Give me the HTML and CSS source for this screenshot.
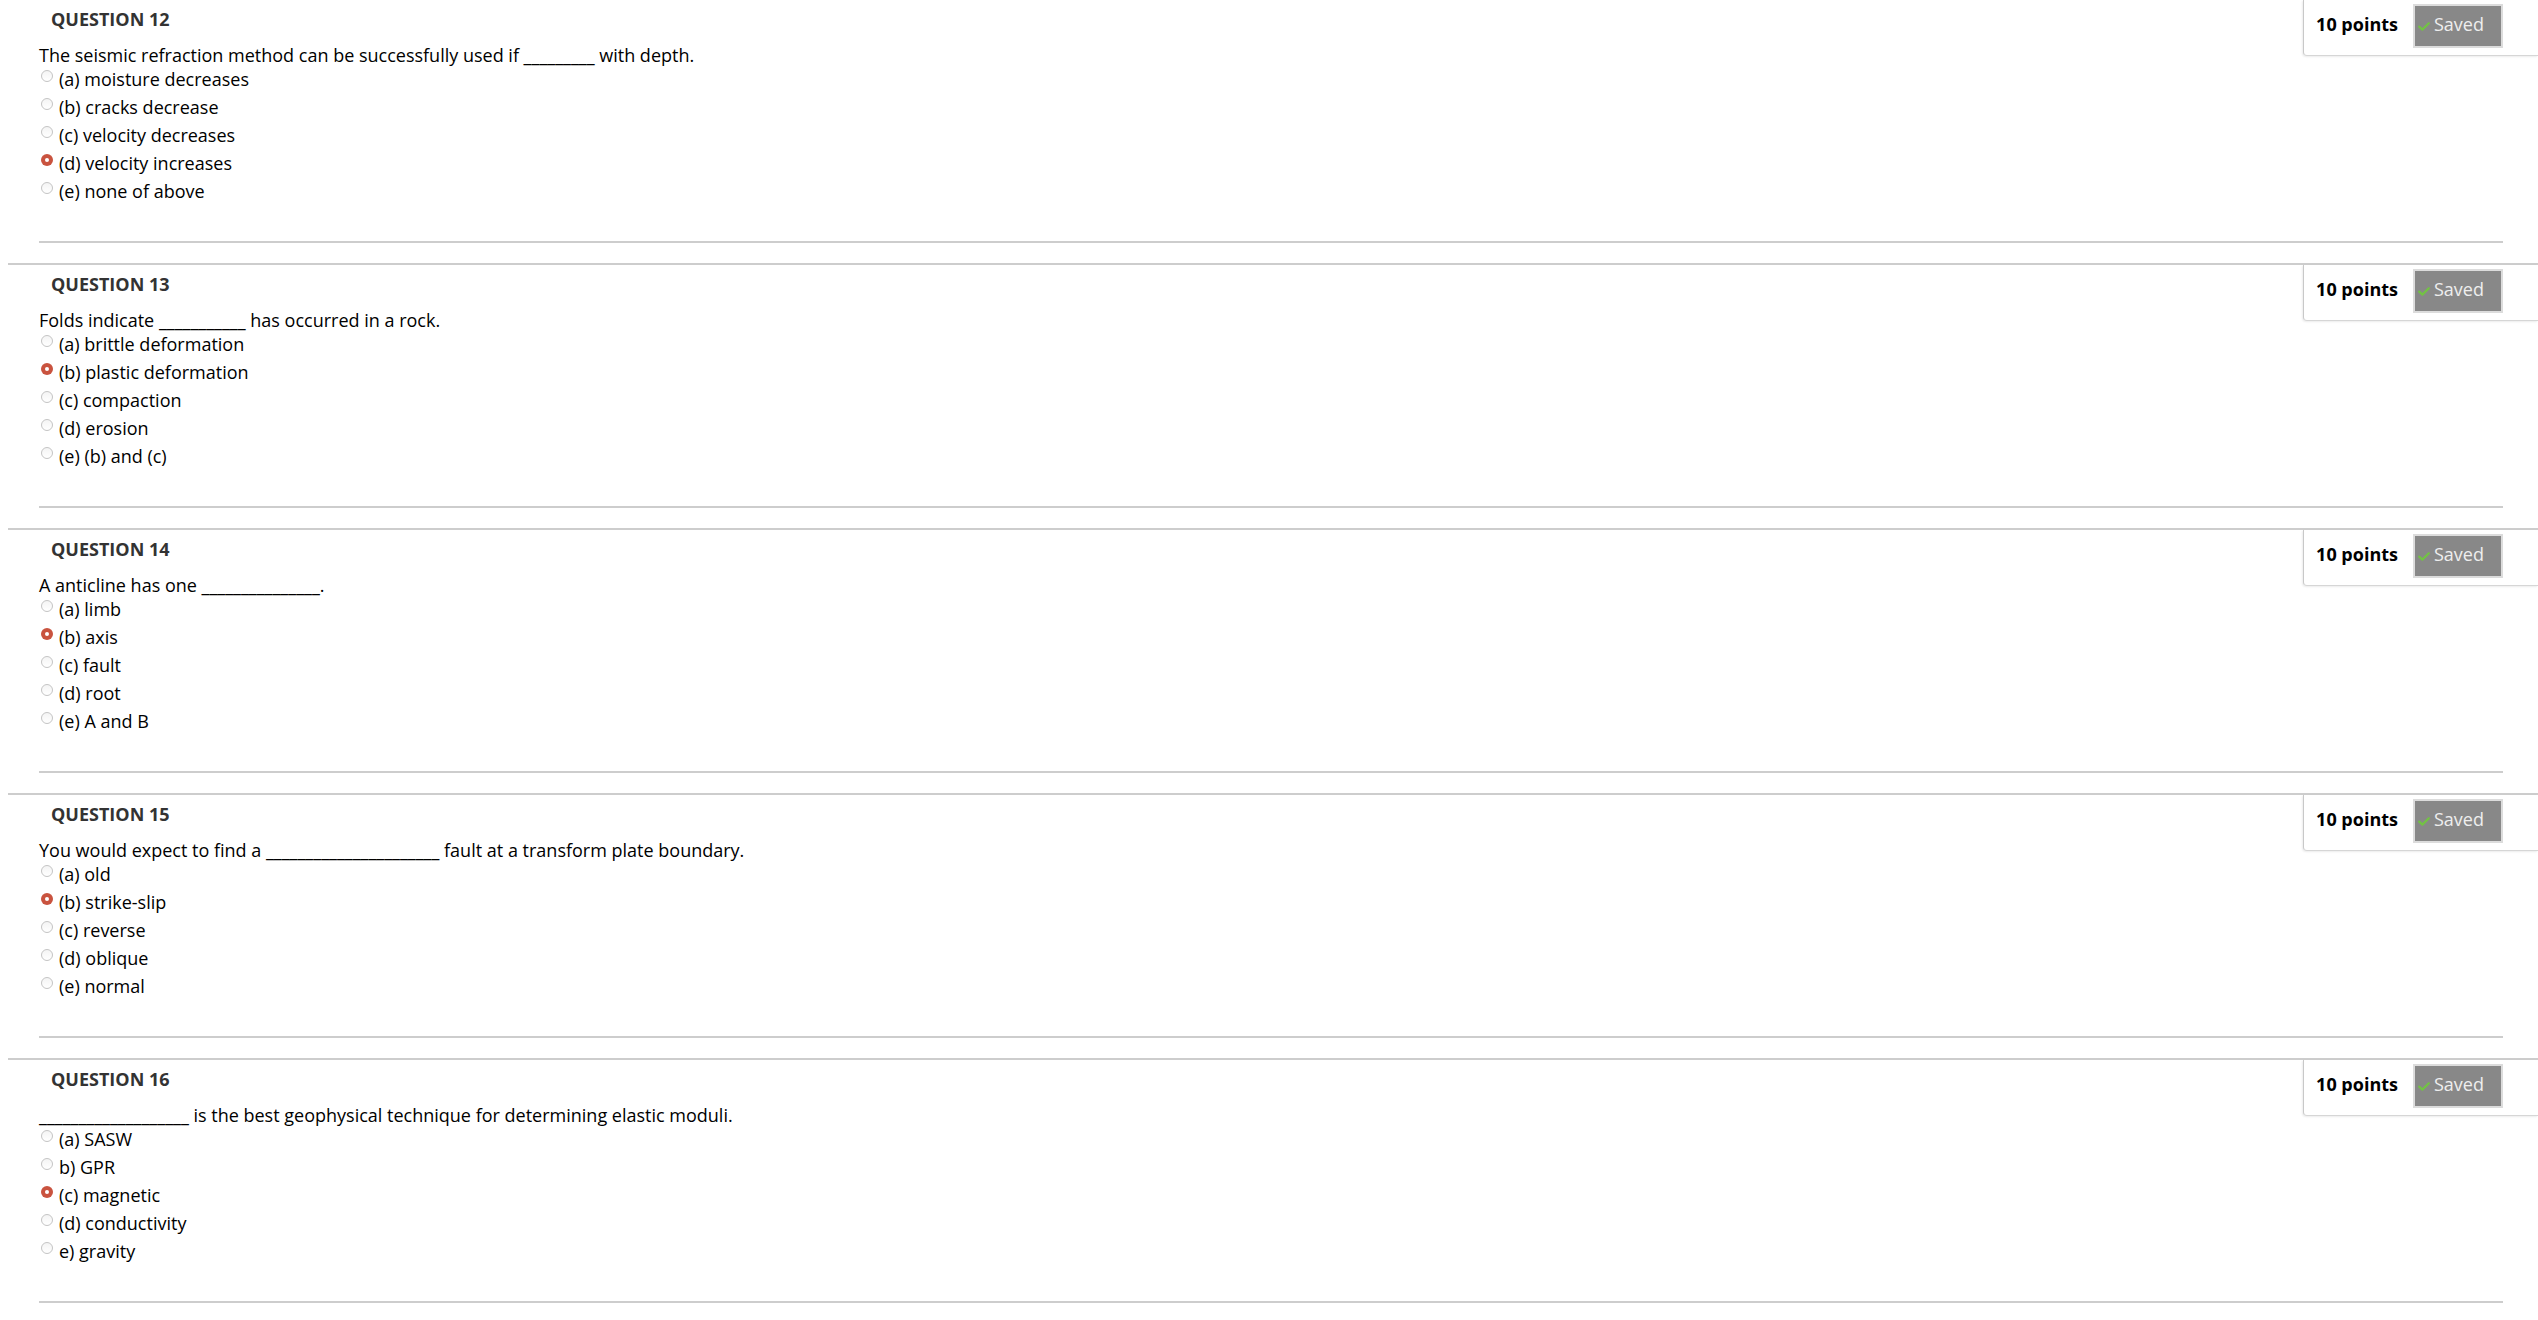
FILE: index.html
```html
<!DOCTYPE html>
<html lang="en">
<head>
<meta charset="utf-8">
<title>Questions</title>
<link rel="stylesheet" href="styles.css">
</head>
<body>
<ul class="questions">
  <li class="question">
    <div class="points-box"><span class="points">10 points</span><span class="saved"><svg class="check" viewBox="0 0 12 9" width="12" height="9"><path d="M1.2 4.6 L4.4 7.6 L10.8 1.2" fill="none" stroke="#72c244" stroke-width="2.2" stroke-linecap="round" stroke-linejoin="round"/></svg>Saved</span></div>
    <h3 class="q-title">QUESTION 12</h3>
    <div class="q-body">
      <p class="q-text">The seismic refraction method can be successfully used if _________ with depth.</p>
      <ul class="options">
        <li class="option"><span class="radio"></span><span>(a) moisture decreases</span></li>
        <li class="option"><span class="radio"></span><span>(b) cracks decrease</span></li>
        <li class="option"><span class="radio"></span><span>(c) velocity decreases</span></li>
        <li class="option"><span class="radio checked"></span><span>(d) velocity increases</span></li>
        <li class="option"><span class="radio"></span><span>(e) none of above</span></li>
      </ul>
    </div>
  </li>
  <li class="question">
    <div class="points-box"><span class="points">10 points</span><span class="saved"><svg class="check" viewBox="0 0 12 9" width="12" height="9"><path d="M1.2 4.6 L4.4 7.6 L10.8 1.2" fill="none" stroke="#72c244" stroke-width="2.2" stroke-linecap="round" stroke-linejoin="round"/></svg>Saved</span></div>
    <h3 class="q-title">QUESTION 13</h3>
    <div class="q-body">
      <p class="q-text">Folds indicate ___________ has occurred in a rock.</p>
      <ul class="options">
        <li class="option"><span class="radio"></span><span>(a) brittle deformation</span></li>
        <li class="option"><span class="radio checked"></span><span>(b) plastic deformation</span></li>
        <li class="option"><span class="radio"></span><span>(c) compaction</span></li>
        <li class="option"><span class="radio"></span><span>(d) erosion</span></li>
        <li class="option"><span class="radio"></span><span>(e) (b) and (c)</span></li>
      </ul>
    </div>
  </li>
  <li class="question">
    <div class="points-box"><span class="points">10 points</span><span class="saved"><svg class="check" viewBox="0 0 12 9" width="12" height="9"><path d="M1.2 4.6 L4.4 7.6 L10.8 1.2" fill="none" stroke="#72c244" stroke-width="2.2" stroke-linecap="round" stroke-linejoin="round"/></svg>Saved</span></div>
    <h3 class="q-title">QUESTION 14</h3>
    <div class="q-body">
      <p class="q-text">A anticline has one _______________.</p>
      <ul class="options">
        <li class="option"><span class="radio"></span><span>(a) limb</span></li>
        <li class="option"><span class="radio checked"></span><span>(b) axis</span></li>
        <li class="option"><span class="radio"></span><span>(c) fault</span></li>
        <li class="option"><span class="radio"></span><span>(d) root</span></li>
        <li class="option"><span class="radio"></span><span>(e) A and B</span></li>
      </ul>
    </div>
  </li>
  <li class="question">
    <div class="points-box"><span class="points">10 points</span><span class="saved"><svg class="check" viewBox="0 0 12 9" width="12" height="9"><path d="M1.2 4.6 L4.4 7.6 L10.8 1.2" fill="none" stroke="#72c244" stroke-width="2.2" stroke-linecap="round" stroke-linejoin="round"/></svg>Saved</span></div>
    <h3 class="q-title">QUESTION 15</h3>
    <div class="q-body">
      <p class="q-text">You would expect to find a ______________________ fault at a transform plate boundary.</p>
      <ul class="options">
        <li class="option"><span class="radio"></span><span>(a) old</span></li>
        <li class="option"><span class="radio checked"></span><span>(b) strike-slip</span></li>
        <li class="option"><span class="radio"></span><span>(c) reverse</span></li>
        <li class="option"><span class="radio"></span><span>(d) oblique</span></li>
        <li class="option"><span class="radio"></span><span>(e) normal</span></li>
      </ul>
    </div>
  </li>
  <li class="question">
    <div class="points-box"><span class="points">10 points</span><span class="saved"><svg class="check" viewBox="0 0 12 9" width="12" height="9"><path d="M1.2 4.6 L4.4 7.6 L10.8 1.2" fill="none" stroke="#72c244" stroke-width="2.2" stroke-linecap="round" stroke-linejoin="round"/></svg>Saved</span></div>
    <h3 class="q-title">QUESTION 16</h3>
    <div class="q-body">
      <p class="q-text">___________________ is the best geophysical technique for determining elastic moduli.</p>
      <ul class="options">
        <li class="option"><span class="radio"></span><span>(a) SASW</span></li>
        <li class="option"><span class="radio"></span><span>b) GPR</span></li>
        <li class="option"><span class="radio checked"></span><span>(c) magnetic</span></li>
        <li class="option"><span class="radio"></span><span>(d) conductivity</span></li>
        <li class="option"><span class="radio"></span><span>e) gravity</span></li>
      </ul>
    </div>
  </li>
</ul>
</body>
</html>
```

FILE: styles.css
```css
html, body {
  margin: 0;
  padding: 0;
  background: #fff;
  overflow: hidden;
}

body {
  font-family: "Open Sans", "Liberation Sans", sans-serif;
  color: #000;
}

.questions {
  list-style: none;
  margin: -2px 0 0 8px;
  padding: 0;
}

.question {
  border-top: 2px solid #cdcdcd;
  margin-bottom: 20px;
}

.q-title {
  margin: 0;
  padding: 7px 0 0 43px;
  font-size: 18px;
  line-height: 24px;
  font-weight: 700;
  color: #333;
}

.points-box {
  float: right;
  display: flex;
  align-items: baseline;
  gap: 15px;
  padding: 4px 35px 7px 12px;
  border-left: 1px solid #c8c8c8;
  border-bottom: 1px solid #d6d6d6;
  border-bottom-left-radius: 4px;
  box-shadow: -1px 1px 2px rgba(0, 0, 0, 0.08);
}

.points {
  font-size: 18px;
  font-weight: 700;
  line-height: 24px;
  color: #000;
}

.saved {
  display: block;
  box-sizing: border-box;
  width: 90px;
  height: 44px;
  padding: 6px 0 0 3px;
  border: 2px solid #dcdcdc;
  background: #888888;
  color: #eeeeee;
  font-size: 18px;
  line-height: 24px;
  white-space: nowrap;
}

.check {
  display: inline-block;
  vertical-align: baseline;
  margin-right: 4px;
}

.q-body {
  margin: 12px 35px 0 31px;
  padding-bottom: 38px;
  border-bottom: 2px solid #cdcdcd;
}

.q-text {
  margin: 0;
  font-size: 18px;
  line-height: 24px;
}

.options {
  list-style: none;
  margin: 0;
  padding: 0;
  display: flex;
  flex-direction: column;
  gap: 4px;
}

.option {
  display: flex;
  align-items: flex-start;
  gap: 6px;
  font-size: 18px;
  line-height: 24px;
}

.radio {
  flex: none;
  box-sizing: border-box;
  width: 12px;
  height: 12px;
  margin: 3px 0 0 2px;
  border-radius: 50%;
  border: 1px solid #c4c4c4;
  background: linear-gradient(#f4f4f4, #ffffff);
  position: relative;
}

.radio.checked {
  border: none;
  background: #c9533f;
}

.radio.checked::after {
  content: "";
  position: absolute;
  left: 4px;
  top: 4px;
  width: 4px;
  height: 4px;
  border-radius: 50%;
  background: #fff;
}
```
